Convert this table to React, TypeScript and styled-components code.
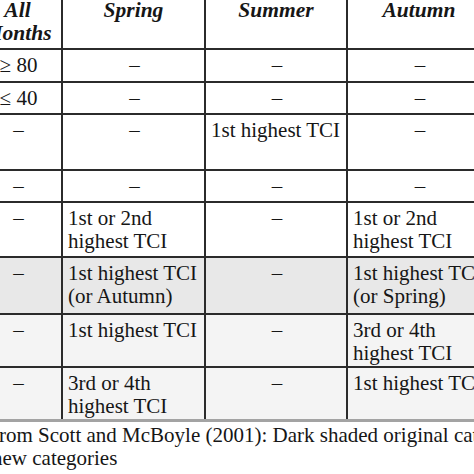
import styled, { createGlobalStyle } from "styled-components";

const GlobalStyle = createGlobalStyle`
  html, body {
    margin: 0;
    padding: 0;
    background: #ffffff;
  }
  body {
    font-family: "Liberation Serif", "Times New Roman", serif;
    color: #161616;
  }
`;

const Page = styled.div`
  width: 474px;
  height: 474px;
  overflow: hidden;
`;

const Table = styled.table`
  margin: -1px 0 0 -26px;
  width: 516px;
  table-layout: fixed;
  border-collapse: collapse;
  font-size: 21px;
  line-height: 23px;
  border-bottom: 3px solid #a3a3a3;
`;

const Col = styled.col<{ $w: number }>`
  width: ${(p) => p.$w}px;
`;

const HeadRow = styled.tr`
  height: 50px;
`;

const HeadCell = styled.th`
  padding: 0 4px;
  vertical-align: top;
  text-align: center;
  font-weight: bold;
  font-style: italic;
  font-size: 21.5px;
  border-left: 2px solid #2b2b2b;
  border-bottom: 2px solid #2b2b2b;
  &:first-child {
    border-left: none;
  }
`;

const Row = styled.tr<{ $shade?: "dark" | "light"; $h: number }>`
  height: ${(p) => p.$h}px;
  background: ${(p) =>
    p.$shade === "dark" ? "#e8e8e8" : p.$shade === "light" ? "#f4f4f4" : "#ffffff"};
`;

const Cell = styled.td<{ $centered: boolean }>`
  padding: 4px 3px 0 5px;
  vertical-align: top;
  text-align: ${(p) => (p.$centered ? "center" : "left")};
  white-space: pre-line;
  border-left: 2px solid #2b2b2b;
  border-top: 2px solid #2b2b2b;
  &:first-child {
    border-left: none;
  }
`;

const Caption = styled.div`
  margin: 2px 0 0 -8px;
  font-size: 21px;
  line-height: 23px;
  white-space: nowrap;
`;

type Shade = "dark" | "light" | undefined;

const widths = [88, 143, 142, 143];

const rows: { h: number; shade: Shade; cells: string[] }[] = [
  { h: 33, shade: undefined, cells: ["≥ 80", "–", "–", "–"] },
  { h: 32, shade: undefined, cells: ["≤ 40", "–", "–", "–"] },
  { h: 56, shade: undefined, cells: ["–", "–", "1st highest TCI", "–"] },
  { h: 32, shade: undefined, cells: ["–", "–", "–", "–"] },
  {
    h: 55,
    shade: undefined,
    cells: ["–", "1st or 2nd\nhighest TCI", "–", "1st or 2nd\nhighest TCI"],
  },
  {
    h: 57,
    shade: "dark",
    cells: ["–", "1st highest TCI\n(or Autumn)", "–", "1st highest TCI\n(or Spring)"],
  },
  {
    h: 53,
    shade: "light",
    cells: ["–", "1st highest TCI", "–", "3rd or 4th\nhighest TCI"],
  },
  {
    h: 53,
    shade: "light",
    cells: ["–", "3rd or 4th\nhighest TCI", "–", "1st highest TCI"],
  },
];

function App() {
  return (
    <Page>
      <GlobalStyle />
      <Table>
        <colgroup>
          {widths.map((w, i) => (
            <Col key={i} $w={w} />
          ))}
        </colgroup>
        <thead>
          <HeadRow>
            <HeadCell>
              All
              <br />
              Months
            </HeadCell>
            <HeadCell>Spring</HeadCell>
            <HeadCell>Summer</HeadCell>
            <HeadCell>Autumn</HeadCell>
          </HeadRow>
        </thead>
        <tbody>
          {rows.map((row, i) => (
            <Row key={i} $h={row.h} $shade={row.shade}>
              {row.cells.map((text, j) => (
                <Cell key={j} $centered={j === 0 || text === "–"}>
                  {text}
                </Cell>
              ))}
            </Row>
          ))}
        </tbody>
      </Table>
      <Caption>
        from Scott and McBoyle (2001): Dark shaded original categories; light shaded
        <br />
        new categories
      </Caption>
    </Page>
  );
}

export default App;
